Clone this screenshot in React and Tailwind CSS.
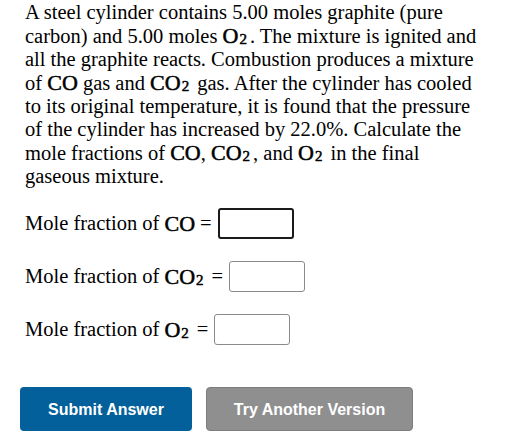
const M = ({ children }) => (
  <span className="font-['Liberation_Serif',serif] text-[22px] [-webkit-text-stroke:0.5px_black]">{children}</span>
)

const Sub = ({ children }) => (
  <sub className="text-[15px] relative top-[1px] ml-[1px] mr-[3px]">{children}</sub>
)

const AnswerRow = ({ label, boxClass }) => (
  <div className="flex items-center h-[31px]">
    <span>Mole fraction of&nbsp;</span>
    {label}
    <span className="ml-[5px]">=</span>
    <input
      type="text"
      className={`ml-[6px] w-[76px] h-[31px] rounded-[3px] bg-white ${boxClass}`}
    />
  </div>
)

export default function App() {
  return (
    <div className="w-[505px] h-[439px] overflow-hidden bg-white pl-[25px] pt-[1px] text-black font-['Liberation_Serif',serif] text-[20.5px] leading-[23px]">
      <p className="w-[458px]">
        A steel cylinder contains 5.00 moles graphite (pure carbon) and 5.00 moles{' '}
        <M>
          O<Sub>2</Sub>
        </M>
        . The mixture is ignited and all the graphite reacts. Combustion produces a mixture of{' '}
        <M>CO</M> gas and{' '}
        <M>
          CO<Sub>2</Sub>
        </M>{' '}
        gas. After the cylinder has cooled to its original temperature, it is found that the pressure
        of the cylinder has increased by 22.0%. Calculate the mole fractions of <M>CO</M>,{' '}
        <M>
          CO<Sub>2</Sub>
        </M>
        , and{' '}
        <M>
          O<Sub>2</Sub>
        </M>{' '}
        in the final gaseous mixture.
      </p>

      <div className="mt-[20px] flex flex-col gap-[22px]">
        <AnswerRow label={<M>CO</M>} boxClass="border-2 border-[#1a1a1a]" />
        <AnswerRow
          label={
            <M>
              CO<Sub>2</Sub>
            </M>
          }
          boxClass="border border-[#8a8a8a]"
        />
        <AnswerRow
          label={
            <M>
              O<Sub>2</Sub>
            </M>
          }
          boxClass="border border-[#8a8a8a]"
        />
      </div>

      <div className="mt-[42px] -ml-[5px] flex gap-[14px] font-['Liberation_Sans',Arial,sans-serif] font-bold text-[16px] text-white">
        <button className="w-[172px] h-[44px] rounded-[4px] bg-[#03609a]">Submit Answer</button>
        <button className="w-[207px] h-[44px] rounded-[4px] bg-[#8f8f8f] border border-[#7d7d7d]">
          Try Another Version
        </button>
      </div>
    </div>
  )
}
